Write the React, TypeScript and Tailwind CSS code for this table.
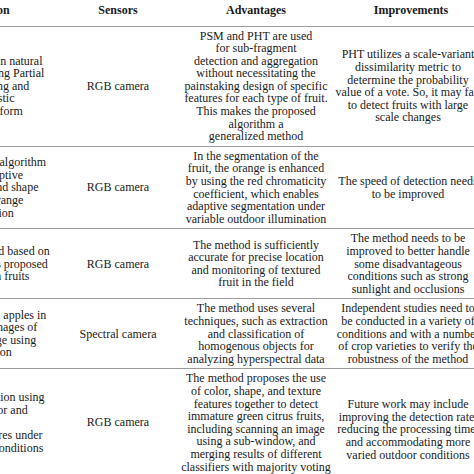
import React from "react";

type Row = {
  method: string[];
  sensor: string;
  advantages: string[];
  improvements: string[];
};

const rows: Row[] = [
  {
    method: [
      "Citrus detection in natural",
      "environments using Partial",
      "Shape Matching and",
      "a Probabilistic",
      "Hough Transform",
    ],
    sensor: "RGB camera",
    advantages: [
      "PSM and PHT are used",
      "for sub-fragment",
      "detection and aggregation",
      "without necessitating the",
      "painstaking design of specific",
      "features for each type of fruit.",
      "This makes the proposed",
      "algorithm a",
      "generalized method",
    ],
    improvements: [
      "PHT utilizes a scale-variant",
      "dissimilarity metric to",
      "determine the probability",
      "value of a vote. So, it may fail",
      "to detect fruits with large",
      "scale changes",
    ],
  },
  {
    method: [
      "Proposed a novel algorithm",
      "based on adaptive",
      "color analysis and shape",
      "features of orange",
      "fruit detection",
    ],
    sensor: "RGB camera",
    advantages: [
      "In the segmentation of the",
      "fruit, the orange is enhanced",
      "by using the red chromaticity",
      "coefficient, which enables",
      "adaptive segmentation under",
      "variable outdoor illumination",
    ],
    improvements: ["The speed of detection needs", "to be improved"],
  },
  {
    method: [
      "A detection method based on",
      "colour texture was proposed",
      "to detect green fruits",
    ],
    sensor: "RGB camera",
    advantages: [
      "The method is sufficiently",
      "accurate for precise location",
      "and monitoring of textured",
      "fruit in the field",
    ],
    improvements: [
      "The method needs to be",
      "improved to better handle",
      "some disadvantageous",
      "conditions such as strong",
      "sunlight and occlusions",
    ],
  },
  {
    method: [
      "Detection of fresh apples in",
      "hyperspectral images of",
      "an orchard image using",
      "classification",
    ],
    sensor: "Spectral camera",
    advantages: [
      "The method uses several",
      "techniques, such as extraction",
      "and classification of",
      "homogenous objects for",
      "analyzing hyperspectral data",
    ],
    improvements: [
      "Independent studies need to",
      "be conducted in a variety of",
      "conditions and with a number",
      "of crop varieties to verify the",
      "robustness of the method",
    ],
  },
  {
    method: [
      "Citrus fruit detection using",
      "combined color and",
      "shape",
      "and texture features under",
      "outdoor natural conditions",
    ],
    sensor: "RGB camera",
    advantages: [
      "The method proposes the use",
      "of color, shape, and texture",
      "features together to detect",
      "immature green citrus fruits,",
      "including scanning an image",
      "using a sub-window, and",
      "merging results of different",
      "classifiers with majority voting",
    ],
    improvements: [
      "Future work may include",
      "improving the detection rate,",
      "reducing the processing time,",
      "and accommodating more",
      "varied outdoor conditions",
    ],
  },
];

const Lines = ({ lines }: { lines: string[] }) => (
  <div className="flex flex-col items-center whitespace-nowrap">
    {lines.map((l, i) => (
      <span key={i}>{l}</span>
    ))}
  </div>
);

const cell = "py-[3px] align-middle border-b border-[#9a9a9a]";
const head = "h-[26px] align-top pt-[4px] border-b border-[#9a9a9a]";

const App = () => {
  return (
    <div className="w-[474px] h-[474px] overflow-hidden bg-white">
      <table
        className="ml-[-90px] border-collapse table-fixed w-[580px] text-[12px] leading-[12.6px] text-[#1a1a1a]"
        style={{ fontFamily: '"Liberation Serif", "DejaVu Serif", serif' }}
      >
        <colgroup>
          <col className="w-[140px]" />
          <col className="w-[136px]" />
          <col className="w-[140px]" />
          <col className="w-[164px]" />
        </colgroup>
        <thead>
          <tr className="font-bold">
            <th className={head}>
              <Lines lines={["Description"]} />
            </th>
            <th className={head}>
              <Lines lines={["Sensors"]} />
            </th>
            <th className={head}>
              <Lines lines={["Advantages"]} />
            </th>
            <th className={head}>
              <div className="pl-[6px]">
                <Lines lines={["Improvements"]} />
              </div>
            </th>
          </tr>
        </thead>
        <tbody>
          {rows.map((r, i) => (
            <tr key={i}>
              <td className={cell}>
                <Lines lines={r.method} />
              </td>
              <td className={cell}>
                <Lines lines={[r.sensor]} />
              </td>
              <td className={cell}>
                <Lines lines={r.advantages} />
              </td>
              <td className={cell}>
                <div className={i === rows.length - 1 ? "pt-[14px]" : ""}>
                  <Lines lines={r.improvements} />
                </div>
              </td>
            </tr>
          ))}
        </tbody>
      </table>
    </div>
  );
};

export default App;
